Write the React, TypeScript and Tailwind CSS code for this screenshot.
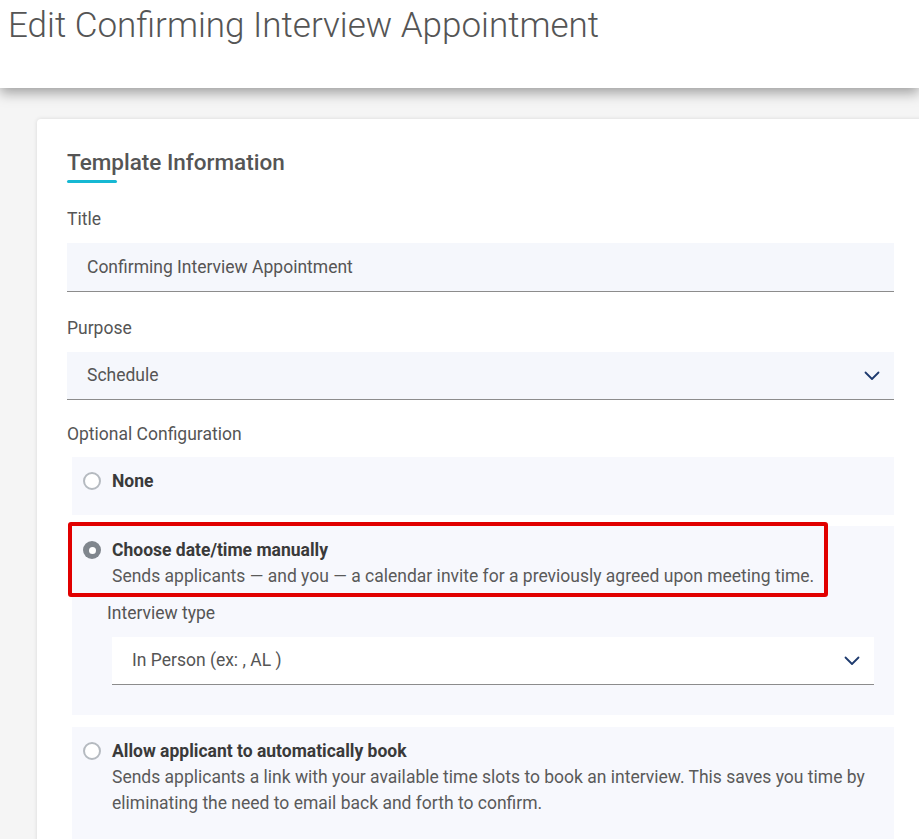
import React from 'react';

const Chevron = () => (
  <svg width="16" height="10" viewBox="0 0 16 10" fill="none" className="shrink-0">
    <path d="M1.5 1.5 L8 8 L14.5 1.5" stroke="#1e3a6e" strokeWidth="1.8" strokeLinecap="round" strokeLinejoin="round" />
  </svg>
);

const Radio = ({ checked }: { checked?: boolean }) =>
  checked ? (
    <span className="mt-[4px] flex h-[18px] w-[18px] shrink-0 items-center justify-center rounded-full bg-[#80868d]">
      <span className="h-[7px] w-[7px] rounded-full bg-white" />
    </span>
  ) : (
    <span className="mt-[4px] h-[18px] w-[18px] shrink-0 rounded-full border-2 border-[#b5bac0] bg-white" />
  );

const OptionBox = ({
  checked,
  title,
  desc,
  children,
  className = '',
}: {
  checked?: boolean;
  title: string;
  desc?: string;
  children?: React.ReactNode;
  className?: string;
}) => (
  <div className={`relative ml-[5px] bg-[#f7f8fd] pt-[11px] ${className}`}>
    <div className="flex gap-[11px] pl-[11px] pr-[20px]">
      <Radio checked={checked} />
      <div className="leading-[26px]">
        <div className="font-bold text-[#3a3a3a]">{title}</div>
        {desc && <div className="text-[#5a5a5a]">{desc}</div>}
      </div>
    </div>
    {children}
  </div>
);

export default function App() {
  return (
    <div className="h-[839px] w-full overflow-hidden bg-[#f5f5f5] font-['Roboto','Liberation_Sans',sans-serif] text-[17.5px] text-[#555]">
      {/* Header */}
      <div className="relative z-10 h-[88px] bg-white pl-[8px] pt-[6px] shadow-[0_5px_12px_rgba(0,0,0,0.35)]">
        <h1 className="text-[35px] font-light leading-[40px] text-[#555]">Edit Confirming Interview Appointment</h1>
      </div>

      {/* Body */}
      <div className="flex pl-[37px] pt-[31px]">
        <div className="w-[887px] shrink-0 rounded-[4px] bg-white px-[30px] pt-[29px] shadow-[0_0_4px_rgba(0,0,0,0.12)]">
          <h2 className="text-[22.5px] font-medium leading-[28px] text-[#555]">Template Information</h2>
          <div className="mt-[4px] h-[3px] w-[50px] rounded-full bg-[#16b8d3]" />

          <div className="mt-[24px] leading-[24px]">Title</div>
          <div className="mt-[12px] flex h-[49px] items-center border-b border-[#8c8c8c] bg-[#f5f7fc] px-[20px]">
            Confirming Interview Appointment
          </div>

          <div className="mt-[24px] leading-[24px]">Purpose</div>
          <div className="mt-[12px] flex h-[48px] items-center justify-between border-b border-[#8c8c8c] bg-[#f5f7fc] pl-[20px] pr-[14px]">
            <span>Schedule</span>
            <Chevron />
          </div>

          <div className="mt-[22px] leading-[24px]">Optional Configuration</div>

          <OptionBox title="None" className="mt-[11px] h-[58px]" />

          <OptionBox
            checked
            title="Choose date/time manually"
            desc="Sends applicants — and you — a calendar invite for a previously agreed upon meeting time."
            className="mt-[11px] pb-[30px]"
          >
            <div className="pointer-events-none absolute left-[-4px] top-[-4px] h-[75px] w-[760px] rounded-[3px] border-4 border-[#e10000]" />
            <div className="ml-[35px] mt-[12px] leading-[24px]">Interview type</div>
            <div className="ml-[40px] mr-[20px] mt-[12px] flex h-[48px] items-center justify-between border-b border-[#8c8c8c] bg-white pl-[20px] pr-[14px]">
              <span>In Person (ex: , AL )</span>
              <Chevron />
            </div>
          </OptionBox>

          <OptionBox
            title="Allow applicant to automatically book"
            desc="Sends applicants a link with your available time slots to book an interview. This saves you time by eliminating the need to email back and forth to confirm."
            className="mt-[12px] pb-[30px]"
          />
        </div>
      </div>
    </div>
  );
}
